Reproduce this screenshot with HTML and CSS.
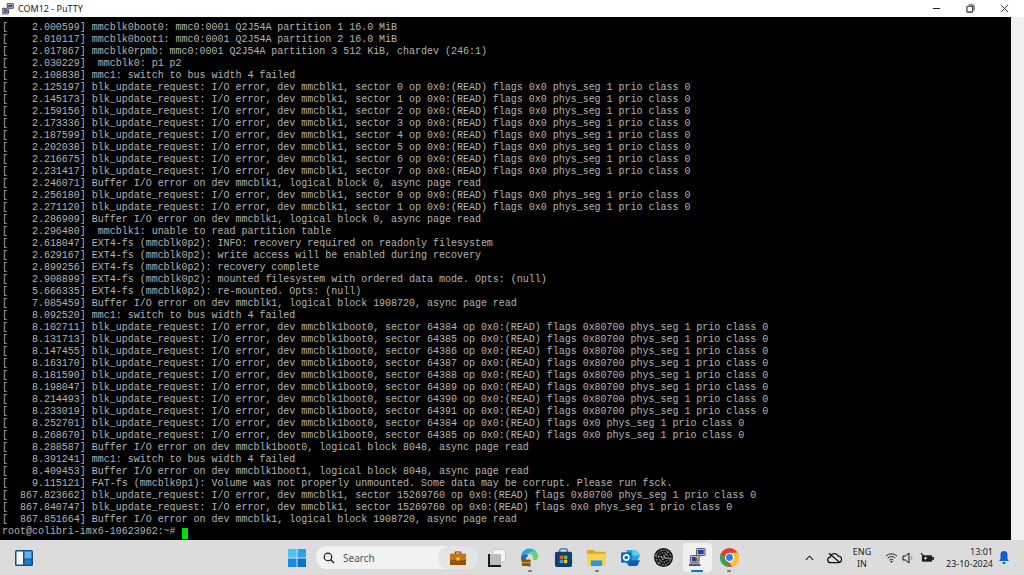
FILE: index.html
```html
<!DOCTYPE html>
<html lang="en">
<head>
<meta charset="utf-8">
<title>COM12 - PuTTY</title>
<link rel="stylesheet" href="styles.css">
</head>
<body>
<header class="titlebar">
  <svg class="app-icon" viewBox="0 0 16 16"><rect x="7" y="1" width="8" height="6" fill="#c8c8d8" stroke="#223"/><rect x="8.5" y="2.5" width="5" height="3" fill="#2a3fa0"/><rect x="1" y="7" width="8" height="6" fill="#c8c8d8" stroke="#223"/><rect x="2.5" y="8.5" width="5" height="3" fill="#2a3fa0"/><path d="M9 5 6 8h2L6 11l4-4H8l2-2z" fill="#f2d01e" stroke="#554" stroke-width=".4"/><rect x="0" y="13.5" width="9" height="2" fill="#889"/></svg>
  <span class="title">COM12 - PuTTY</span>
  <div class="win-btns">
    <svg viewBox="0 0 10 10"><path d="M1 5h8" stroke="#222" stroke-width="1.1"/></svg>
    <svg viewBox="0 0 10 10"><rect x="1" y="2.5" width="6.5" height="6.5" rx="1" fill="none" stroke="#222" stroke-width="1.2"/><path d="M3 1h5a1 1 0 0 1 1 1v5" fill="none" stroke="#222"/></svg>
    <svg viewBox="0 0 10 10"><path d="M1 1l8 8M9 1l-8 8" stroke="#222"/></svg>
  </div>
</header>
<main class="window">
<pre class="terminal">[    2.000599] mmcblk0boot0: mmc0:0001 Q2J54A partition 1 16.0 MiB
[    2.010117] mmcblk0boot1: mmc0:0001 Q2J54A partition 2 16.0 MiB
[    2.017867] mmcblk0rpmb: mmc0:0001 Q2J54A partition 3 512 KiB, chardev (246:1)
[    2.030229]  mmcblk0: p1 p2
[    2.108838] mmc1: switch to bus width 4 failed
[    2.125197] blk_update_request: I/O error, dev mmcblk1, sector 0 op 0x0:(READ) flags 0x0 phys_seg 1 prio class 0
[    2.145173] blk_update_request: I/O error, dev mmcblk1, sector 1 op 0x0:(READ) flags 0x0 phys_seg 1 prio class 0
[    2.159156] blk_update_request: I/O error, dev mmcblk1, sector 2 op 0x0:(READ) flags 0x0 phys_seg 1 prio class 0
[    2.173336] blk_update_request: I/O error, dev mmcblk1, sector 3 op 0x0:(READ) flags 0x0 phys_seg 1 prio class 0
[    2.187599] blk_update_request: I/O error, dev mmcblk1, sector 4 op 0x0:(READ) flags 0x0 phys_seg 1 prio class 0
[    2.202038] blk_update_request: I/O error, dev mmcblk1, sector 5 op 0x0:(READ) flags 0x0 phys_seg 1 prio class 0
[    2.216675] blk_update_request: I/O error, dev mmcblk1, sector 6 op 0x0:(READ) flags 0x0 phys_seg 1 prio class 0
[    2.231417] blk_update_request: I/O error, dev mmcblk1, sector 7 op 0x0:(READ) flags 0x0 phys_seg 1 prio class 0
[    2.246071] Buffer I/O error on dev mmcblk1, logical block 0, async page read
[    2.256180] blk_update_request: I/O error, dev mmcblk1, sector 0 op 0x0:(READ) flags 0x0 phys_seg 1 prio class 0
[    2.271120] blk_update_request: I/O error, dev mmcblk1, sector 1 op 0x0:(READ) flags 0x0 phys_seg 1 prio class 0
[    2.286909] Buffer I/O error on dev mmcblk1, logical block 0, async page read
[    2.296480]  mmcblk1: unable to read partition table
[    2.618047] EXT4-fs (mmcblk0p2): INFO: recovery required on readonly filesystem
[    2.629167] EXT4-fs (mmcblk0p2): write access will be enabled during recovery
[    2.899256] EXT4-fs (mmcblk0p2): recovery complete
[    2.908899] EXT4-fs (mmcblk0p2): mounted filesystem with ordered data mode. Opts: (null)
[    5.666335] EXT4-fs (mmcblk0p2): re-mounted. Opts: (null)
[    7.085459] Buffer I/O error on dev mmcblk1, logical block 1908720, async page read
[    8.092520] mmc1: switch to bus width 4 failed
[    8.102711] blk_update_request: I/O error, dev mmcblk1boot0, sector 64384 op 0x0:(READ) flags 0x80700 phys_seg 1 prio class 0
[    8.131713] blk_update_request: I/O error, dev mmcblk1boot0, sector 64385 op 0x0:(READ) flags 0x80700 phys_seg 1 prio class 0
[    8.147455] blk_update_request: I/O error, dev mmcblk1boot0, sector 64386 op 0x0:(READ) flags 0x80700 phys_seg 1 prio class 0
[    8.163170] blk_update_request: I/O error, dev mmcblk1boot0, sector 64387 op 0x0:(READ) flags 0x80700 phys_seg 1 prio class 0
[    8.181590] blk_update_request: I/O error, dev mmcblk1boot0, sector 64388 op 0x0:(READ) flags 0x80700 phys_seg 1 prio class 0
[    8.198047] blk_update_request: I/O error, dev mmcblk1boot0, sector 64389 op 0x0:(READ) flags 0x80700 phys_seg 1 prio class 0
[    8.214493] blk_update_request: I/O error, dev mmcblk1boot0, sector 64390 op 0x0:(READ) flags 0x80700 phys_seg 1 prio class 0
[    8.233019] blk_update_request: I/O error, dev mmcblk1boot0, sector 64391 op 0x0:(READ) flags 0x80700 phys_seg 1 prio class 0
[    8.252701] blk_update_request: I/O error, dev mmcblk1boot0, sector 64384 op 0x0:(READ) flags 0x0 phys_seg 1 prio class 0
[    8.268670] blk_update_request: I/O error, dev mmcblk1boot0, sector 64385 op 0x0:(READ) flags 0x0 phys_seg 1 prio class 0
[    8.288587] Buffer I/O error on dev mmcblk1boot0, logical block 8048, async page read
[    8.391241] mmc1: switch to bus width 4 failed
[    8.409453] Buffer I/O error on dev mmcblk1boot1, logical block 8048, async page read
[    9.115121] FAT-fs (mmcblk0p1): Volume was not properly unmounted. Some data may be corrupt. Please run fsck.
[  867.823662] blk_update_request: I/O error, dev mmcblk1, sector 15269760 op 0x0:(READ) flags 0x80700 phys_seg 1 prio class 0
[  867.840747] blk_update_request: I/O error, dev mmcblk1, sector 15269760 op 0x0:(READ) flags 0x0 phys_seg 1 prio class 0
[  867.851664] Buffer I/O error on dev mmcblk1, logical block 1908720, async page read
root@colibri-imx6-10623962:~# <span class="cursor"> </span></pre>
  <div class="scrollbar"></div>
</main>
<footer class="taskbar">
  <svg class="widgets" viewBox="0 0 18 16"><rect width="18" height="16" rx="1.5" fill="#14508c"/><rect x="1.5" y="1.5" width="6.5" height="13" fill="#f4f6f8"/><rect x="9.5" y="1.5" width="7" height="7" fill="#5cb4ec"/><rect x="9.5" y="9.5" width="7" height="5" fill="#1a7fd0"/></svg>
  <nav class="center">
    <svg class="start" viewBox="0 0 18 18"><rect width="8.5" height="8.5" fill="#4cc2f4"/><rect x="9.5" width="8.5" height="8.5" fill="#2ca4ec"/><rect y="9.5" width="8.5" height="8.5" fill="#1a8ae0"/><rect x="9.5" y="9.5" width="8.5" height="8.5" fill="#0b72cc"/></svg>
    <div class="search">
      <svg class="lens" viewBox="0 0 14 14"><circle cx="5.8" cy="5.8" r="4.4" fill="none" stroke="#111" stroke-width="1.4"/><path d="M9 9l4 4" stroke="#111" stroke-width="1.5"/></svg>
      <span class="search-text">Search</span>
      <span class="promo"><svg viewBox="0 0 16 14"><path d="M5.5 3V1h5v2" fill="none" stroke="#6b3a08" stroke-width="1.2"/><rect y="2.5" width="16" height="11.5" rx="1" fill="#c9740f"/><rect y="9" width="16" height="5" fill="#96520a"/><rect x="6.5" y="6.5" width="3" height="3" fill="#f7d154"/></svg></span>
    </div>
    <svg class="taskview" viewBox="0 0 18 18"><rect x="5" y="0.5" width="12.500" height="12.500" fill="#f4f4f4" stroke="#ccc"/><rect x="1" y="5" width="12" height="12" fill="#bdbdbd"/><path d="M1 5v12h12" fill="none" stroke="#1a1a1a" stroke-width="2"/></svg>
    <span class="app">
      <svg viewBox="0 0 20 20"><path d="M1 10a9 9 0 0 1 18-1c0 3-3 4-5 3 1-3-1-6-5-6-4 0-7 2-8 4z" fill="#2aa5de"/><path d="M19 9c0 3-3 4-5 3 1-3-1-6-5-6 3-5 9-3 10 3z" fill="#62d86c"/><path d="M1 10c1-3 6-5 8-2-2 1-3 3-3 5 0 3 3 6 7 6-6 2-12-3-12-9z" fill="#1668c4"/><rect x="2" y="12" width="9" height="7" rx="1" fill="#8a5410"/><rect x="2" y="15" width="9" height="1" fill="#e2a63b"/></svg>
      <i class="dot"></i>
    </span>
    <span class="app">
      <svg viewBox="0 0 18 20"><path d="M5 5V2.500a1.500 1.500 0 0 1 1.500-1.500h5A1.500 1.500 0 0 1 13 2.500V5" fill="none" stroke="#2a6ea8" stroke-width="1.3"/><rect y="4" width="18" height="16" rx="2" fill="#123f70"/><rect x="5" y="8" width="3.600" height="3.600" fill="#f05a28"/><rect x="9.400" y="8" width="3.600" height="3.600" fill="#7cba3c"/><rect x="5" y="12.400" width="3.600" height="3.600" fill="#2aa5e8"/><rect x="9.400" y="12.400" width="3.600" height="3.600" fill="#fbc02d"/></svg>
    </span>
    <span class="app">
      <svg viewBox="0 0 20 18"><path d="M0 2a1 1 0 0 1 1-1h6l2 2h10a1 1 0 0 1 1 1v3H0z" fill="#e3a71e"/><rect y="5" width="20" height="13" rx="1" fill="#fbd34e"/><rect x="4" y="12" width="12" height="6" fill="#2a9ae0"/></svg>
      <i class="dot"></i>
    </span>
    <span class="app">
      <svg viewBox="0 0 20 18"><path d="M6 1h10l4 5-4 10H6z" fill="#22a2e4"/><path d="M12 1h4l4 6h-8z" fill="#5bd0f4"/><path d="M6 12h14l-3 6H8z" fill="#0d5fb0"/><rect y="3.500" width="11" height="11" rx="1.500" fill="#0f6cbd"/><circle cx="5.500" cy="9" r="2.800" fill="none" stroke="#fff" stroke-width="1.700"/></svg>
    </span>
    <span class="app">
      <svg viewBox="0 0 18 18"><circle cx="9" cy="9" r="9" fill="#111"/><g fill="none" stroke="#ddd" stroke-width=".8" stroke-dasharray="1.500 1.200"><circle cx="9" cy="9" r="7"/><circle cx="9" cy="9" r="4.500"/><circle cx="9" cy="9" r="2"/><path d="M1 7l16 4M4 15L14 3"/></g></svg>
    </span>
    <span class="app active">
      <svg viewBox="0 0 18 20"><rect x="8" y="0.500" width="9" height="7.500" rx="1" fill="#c4c8d8" stroke="#2a2a44" stroke-width=".8"/><rect x="9.500" y="2" width="6" height="4.500" fill="#2438a8"/><rect x="1.500" y="8" width="9" height="7.500" rx="1" fill="#c4c8d8" stroke="#2a2a44" stroke-width=".8"/><rect x="3" y="9.500" width="6" height="4.500" fill="#2438a8"/><path d="M11 6 6 10.500h3L6 15l6-5.500H9l3-3.500z" fill="#f4d81e" stroke="#554a10" stroke-width=".4"/><rect x="0" y="16.500" width="12" height="2.500" fill="#50586c"/></svg>
      <i class="bar"></i>
    </span>
    <span class="app">
      <svg viewBox="0 0 20 20"><circle cx="10" cy="10" r="10" fill="#e33b2e"/><path d="M10 5h9a10 10 0 0 1-6 14.500L9 15z" fill="#fbc02d"/><path d="M1.200 5.200 6 13l4 7A10 10 0 0 1 1.200 5.200z" fill="#2fa84f"/><circle cx="10" cy="10" r="4.800" fill="#fff"/><circle cx="10" cy="10" r="3.600" fill="#2a7de1"/></svg>
      <i class="dot"></i>
    </span>
  </nav>
  <div class="tray">
    <svg class="chev" viewBox="0 0 10 6"><path d="M1 5l4-4 4 4" fill="none" stroke="#111" stroke-width="1.200"/></svg>
    <svg class="cloud" viewBox="0 0 16 12"><path d="M4 11a3 3 0 0 1-.5-6 4.500 4.500 0 0 1 8.500-1 3.500 3.500 0 0 1 0 7z" fill="none" stroke="#111" stroke-width="1.300"/><path d="M2 1l12 10" stroke="#111" stroke-width="1.300"/></svg>
    <div class="lang"><span>ENG</span><span>IN</span></div>
    <svg class="wifi" viewBox="0 0 14 11"><path d="M1 4a8.500 8.500 0 0 1 12 0M3 6.200a5.500 5.500 0 0 1 8 0M5 8.300a2.700 2.700 0 0 1 4 0" fill="none" stroke="#111"/><circle cx="7" cy="10" r="1" fill="#111"/></svg>
    <svg class="speaker" viewBox="0 0 14 12"><path d="M1 4h2.500L7 1v10L3.500 8H1z" fill="none" stroke="#111"/><path d="M9 4a3 3 0 0 1 0 4" fill="none" stroke="#999"/><path d="M11 2.500a5.500 5.500 0 0 1 0 7" fill="none" stroke="#ccc"/></svg>
    <svg class="battery" viewBox="0 0 15 11"><rect x="2" y="3" width="11" height="7" rx="1" fill="#222"/><rect x="13" y="5" width="2" height="3" fill="#222"/><path d="M1 1l4 4" stroke="#222" stroke-width="1.300"/><path d="M6 4 4 7h2l-1 2 3-3.500H6z" fill="#ddd"/></svg>
    <div class="clock"><span>13:01</span><span>23-10-2024</span></div>
    <svg class="bell" viewBox="0 0 10 13"><path d="M5 0a3.500 3.500 0 0 1 3.500 3.500V8L10 10H0l1.500-2V3.500A3.500 3.500 0 0 1 5 0z" fill="#0f5fc8"/><rect x="3.500" y="11" width="3" height="2" rx="1" fill="#0f5fc8"/></svg>
  </div>
</footer>
</body>
</html>
```
FILE: styles.css
```css
* { box-sizing: border-box; }
html, body { margin: 0; padding: 0; }
body {
  width: 1024px;
  height: 575px;
  overflow: hidden;
  display: flex;
  flex-direction: column;
  background: #f0f0f0;
  font-family: "Noto Sans", "Open Sans", sans-serif;
}
.titlebar {
  height: 17px;
  flex: none;
  background: #fff;
  display: flex;
  align-items: center;
  padding-left: 2px;
}
.app-icon { width: 12px; height: 12px; }
.title { margin-left: 4px; font-size: 9px; color: #222; line-height: 17px; }
.win-btns {
  margin-left: auto;
  display: flex;
  gap: 25px;
  padding-right: 15px;
}
.win-btns svg { width: 9px; height: 9px; display: block; }
.window {
  height: 523px;
  flex: none;
  display: flex;
}
.terminal {
  margin: 0;
  flex: 1;
  background: #000;
  color: #b4b4b4;
  font-family: "Liberation Mono", monospace;
  font-size: 10px;
  line-height: 12px;
  padding: 5px 0 0 2px;
  overflow: hidden;
  letter-spacing: -0.015px;
}
.cursor { background: #00e000; display: inline-block; width: 6px; height: 11px; vertical-align: -2px; margin-left: 0; }
.scrollbar { width: 13px; background: #f0f0f0; }
.taskbar {
  height: 35px;
  flex: none;
  background: #dcdcdc;
  display: flex;
  align-items: center;
  padding-left: 15px;
  padding-right: 15px;
}
.widgets { width: 18px; height: 16px; }
.center {
  margin-left: 255px;
  display: flex;
  align-items: center;
}
.start { width: 18px; height: 18px; }
.search {
  margin-left: 10px;
  width: 162px;
  height: 23px;
  border-radius: 12px;
  background: #f2f2f2;
  display: flex;
  align-items: center;
  padding-left: 7px;
}
.lens { width: 12px; height: 12px; }
.search-text { margin-left: 8px; font-size: 10px; color: #555; }
.promo {
  margin-left: auto;
  width: 40px;
  height: 23px;
  border-radius: 12px;
  background: #e4e4e4;
  display: flex;
  align-items: center;
  justify-content: center;
}
.promo svg { width: 16px; height: 14px; }
.taskview { width: 18px; height: 18px; margin: 0 7px 0 10px; }
.app {
  position: relative;
  width: 33.5px;
  height: 31px;
  display: flex;
  align-items: center;
  justify-content: center;
  border-radius: 4px;
}
.app svg { width: 19px; height: 19px; }
.app.active { background: #f0f0f0; width: 29px; height: 29px; margin: 0 1px 0 2px; }
.dot {
  position: absolute;
  left: 50%;
  bottom: 1px;
  width: 4px;
  height: 2px;
  margin-left: -2px;
  border-radius: 1px;
  background: #777;
}
.bar {
  position: absolute;
  left: 50%;
  bottom: 0;
  width: 12px;
  height: 2px;
  margin-left: -6px;
  border-radius: 1px;
  background: #0f6cd0;
}
.tray {
  margin-left: auto;
  display: flex;
  align-items: center;
  color: #222;
  font-size: 9px;
}
.chev { width: 9px; height: 6px; }
.cloud { width: 15px; height: 12px; margin-left: 13px; }
.lang {
  width: 22px;
  margin-left: 9px;
  display: flex;
  flex-direction: column;
  align-items: center;
  line-height: 12px;
}
.wifi { width: 13px; height: 11px; margin-left: 12px; }
.speaker { width: 14px; height: 12px; margin-left: 4px; }
.battery { width: 14px; height: 11px; margin-left: 4px; }
.clock {
  width: 60px;
  margin-left: -1px;
  display: flex;
  flex-direction: column;
  align-items: flex-end;
  line-height: 12px;
}
.bell { width: 10px; height: 13px; margin-left: 6px; }
```
